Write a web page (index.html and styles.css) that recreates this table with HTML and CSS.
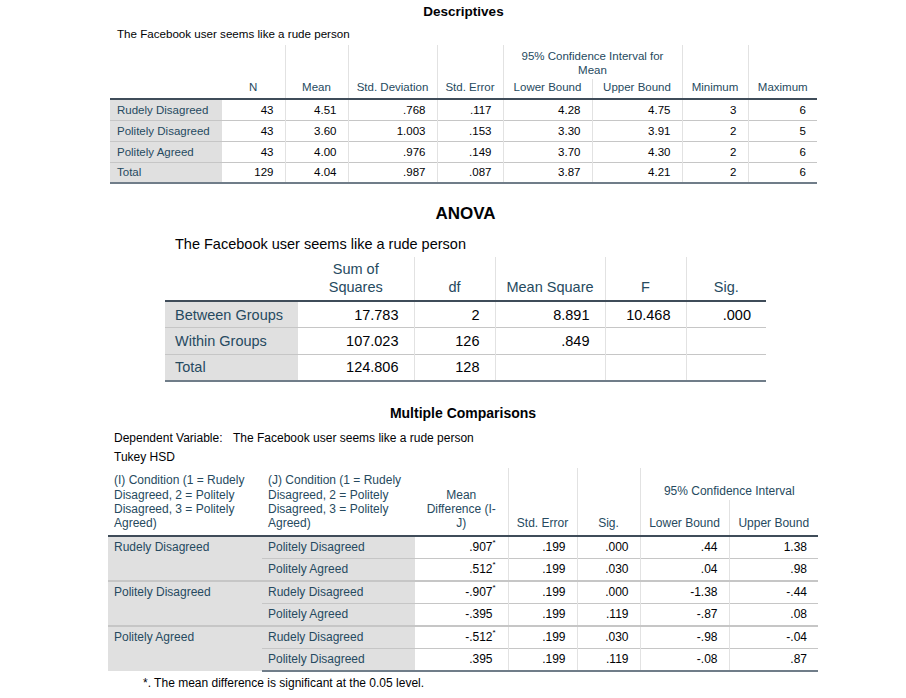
FILE: index.html
```html
<!DOCTYPE html>
<html>
<head>
<meta charset="utf-8">
<link rel="stylesheet" href="styles.css">
</head>
<body>
<section class="block desc">
  <div class="title">Descriptives</div>
  <div class="caption">The Facebook user seems like a rude person</div>
  <table class="t">
    <colgroup>
      <col class="d1"><col class="d2"><col class="d3"><col class="d4"><col class="d5"><col class="d6"><col class="d7"><col class="d8"><col class="d9">
    </colgroup>
    <thead>
      <tr class="h1">
        <th rowspan="2" class="nol"></th>
        <th rowspan="2" class="nol">N</th>
        <th rowspan="2">Mean</th>
        <th rowspan="2">Std. Deviation</th>
        <th rowspan="2">Std. Error</th>
        <th colspan="2" class="span">95% Confidence Interval for<br>Mean</th>
        <th rowspan="2">Minimum</th>
        <th rowspan="2">Maximum</th>
      </tr>
      <tr class="h2">
        <th>Lower Bound</th>
        <th>Upper Bound</th>
      </tr>
    </thead>
    <tbody>
      <tr><td class="lab">Rudely Disagreed</td><td class="nol">43</td><td>4.51</td><td>.768</td><td>.117</td><td>4.28</td><td>4.75</td><td>3</td><td>6</td></tr>
      <tr><td class="lab">Politely Disagreed</td><td class="nol">43</td><td>3.60</td><td>1.003</td><td>.153</td><td>3.30</td><td>3.91</td><td>2</td><td>5</td></tr>
      <tr><td class="lab">Politely Agreed</td><td class="nol">43</td><td>4.00</td><td>.976</td><td>.149</td><td>3.70</td><td>4.30</td><td>2</td><td>6</td></tr>
      <tr><td class="lab">Total</td><td class="nol">129</td><td>4.04</td><td>.987</td><td>.087</td><td>3.87</td><td>4.21</td><td>2</td><td>6</td></tr>
    </tbody>
  </table>
</section>

<section class="block anova">
  <div class="title">ANOVA</div>
  <div class="caption">The Facebook user seems like a rude person</div>
  <table class="t">
    <colgroup>
      <col class="a1"><col class="a2"><col class="a3"><col class="a4"><col class="a5"><col class="a6">
    </colgroup>
    <thead>
      <tr class="h1">
        <th class="nol"></th>
        <th class="nol">Sum of<br>Squares</th>
        <th>df</th>
        <th>Mean Square</th>
        <th>F</th>
        <th>Sig.</th>
      </tr>
    </thead>
    <tbody>
      <tr><td class="lab">Between Groups</td><td class="nol">17.783</td><td>2</td><td>8.891</td><td>10.468</td><td>.000</td></tr>
      <tr><td class="lab">Within Groups</td><td class="nol">107.023</td><td>126</td><td>.849</td><td></td><td></td></tr>
      <tr><td class="lab">Total</td><td class="nol">124.806</td><td>128</td><td></td><td></td><td></td></tr>
    </tbody>
  </table>
</section>

<section class="block mult">
  <div class="title">Multiple Comparisons</div>
  <div class="meta first"><span class="metakey">Dependent Variable:</span>The Facebook user seems like a rude person</div>
  <div class="meta">Tukey HSD</div>
  <table class="t">
    <colgroup>
      <col class="m1"><col class="m2"><col class="m3"><col class="m4"><col class="m5"><col class="m6"><col class="m7">
    </colgroup>
    <thead>
      <tr class="h1">
        <th rowspan="2" class="nol left">(I) Condition (1 = Rudely<br>Disagreed, 2 = Politely<br>Disagreed, 3 = Politely<br>Agreed)</th>
        <th rowspan="2" class="nol left">(J) Condition (1 = Rudely<br>Disagreed, 2 = Politely<br>Disagreed, 3 = Politely<br>Agreed)</th>
        <th rowspan="2" class="nol">Mean<br>Difference (I-<br>J)</th>
        <th rowspan="2">Std. Error</th>
        <th rowspan="2">Sig.</th>
        <th colspan="2" class="span">95% Confidence Interval</th>
      </tr>
      <tr class="h2">
        <th>Lower Bound</th>
        <th>Upper Bound</th>
      </tr>
    </thead>
    <tbody>
      <tr class="grp"><td rowspan="2" class="lab top">Rudely Disagreed</td><td class="lab">Politely Disagreed</td><td class="nol">.907<sup>*</sup></td><td>.199</td><td>.000</td><td>.44</td><td>1.38</td></tr>
      <tr class="sub"><td class="lab">Politely Agreed</td><td class="nol">.512<sup>*</sup></td><td>.199</td><td>.030</td><td>.04</td><td>.98</td></tr>
      <tr class="grp"><td rowspan="2" class="lab top">Politely Disagreed</td><td class="lab">Rudely Disagreed</td><td class="nol">-.907<sup>*</sup></td><td>.199</td><td>.000</td><td>-1.38</td><td>-.44</td></tr>
      <tr class="sub"><td class="lab">Politely Agreed</td><td class="nol">-.395<span class="nosup"></span></td><td>.199</td><td>.119</td><td>-.87</td><td>.08</td></tr>
      <tr class="grp"><td rowspan="2" class="lab top">Politely Agreed</td><td class="lab">Rudely Disagreed</td><td class="nol">-.512<sup>*</sup></td><td>.199</td><td>.030</td><td>-.98</td><td>-.04</td></tr>
      <tr class="sub"><td class="lab">Politely Disagreed</td><td class="nol">.395<span class="nosup"></span></td><td>.199</td><td>.119</td><td>-.08</td><td>.87</td></tr>
    </tbody>
  </table>
  <div class="foot">*. The mean difference is significant at the 0.05 level.</div>
</section>
</body>
</html>
```

FILE: styles.css
```css
* { box-sizing: border-box; }
body {
  margin: 0;
  background: #ffffff;
  font-family: "Liberation Sans", Arial, sans-serif;
  color: #010205;
}
.block { display: block; }
.title {
  text-align: center;
  font-weight: bold;
  height: 24px;
  line-height: 24px;
  color: #010205;
}
.caption { color: #010205; }

table.t {
  border-collapse: collapse;
  table-layout: fixed;
}
.t th, .t td {
  padding: 0;
  white-space: nowrap;
  overflow: hidden;
}
.t th {
  font-weight: normal;
  color: #264a60;
  text-align: center;
  vertical-align: bottom;
  border-left: 1px solid #e2e2e2;
}
.t th.nol, .t td.nol, .t td.lab { border-left: none; }
.t th.left { text-align: left; }
.t thead tr:last-child th, .t tr.h1 th[rowspan], .anova .t tr.h1 th { border-bottom: 2px solid #3f4c59; }
.t td {
  text-align: right;
  vertical-align: middle;
  border-left: 1px solid #e2e2e2;
  border-top: 1px solid #c6c6c6;
  color: #010205;
}
.t tbody tr:last-child td { border-bottom: 2px solid #707d89; }
.t td.lab {
  background: #e0e0e0;
  color: #264a60;
  text-align: left;
}

/* ---------- Descriptives ---------- */
.desc { margin-left: 110px; width: 707px; }
.desc .title { font-size: 13.5px; }
.desc .caption {
  font-size: 11.6px;
  height: 21px;
  line-height: 20px;
  padding-left: 7px;
}
.desc .t { font-size: 11.5px; }
.d1 { width: 112px; } .d2 { width: 63px; } .d3 { width: 63px; }
.d4 { width: 89px; } .d5 { width: 66px; } .d6 { width: 89px; }
.d7 { width: 90px; } .d8 { width: 66px; } .d9 { width: 69px; }
.desc .t tr.h1 { height: 34px; }
.desc .t tr.h2 { height: 20px; }
.desc .t th { padding: 0 2px 4px; line-height: 14px; }
.desc .t th.span { padding-bottom: 2px; }
.desc .t tbody tr { height: 21px; }
.desc .t td { padding-right: 11px; }
.desc .t td.lab { padding-left: 7px; padding-right: 0; }

/* ---------- ANOVA ---------- */
.anova { margin-left: 165px; width: 601px; margin-top: 18px; }
.anova .title { font-size: 17px; }
.anova .caption {
  font-size: 14.5px;
  line-height: 20px;
  padding: 8px 0 3px 10px;
}
.anova .t { font-size: 14.5px; }
.a1 { width: 133px; } .a2 { width: 116px; } .a3 { width: 81px; }
.a4 { width: 110px; } .a5 { width: 81px; } .a6 { width: 80px; }
.anova .t tr.h1 { height: 44px; }
.anova .t th { line-height: 18px; padding: 0 2px 4px; }
.anova .t tbody tr { height: 26.5px; }
.anova .t td { padding-right: 15px; }
.anova .t td.lab { padding-left: 10px; padding-right: 0; }

/* ---------- Multiple Comparisons ---------- */
.mult { margin-left: 108px; width: 710px; margin-top: 19px; }
.mult .title { font-size: 14px; }
.meta {
  font-size: 12px;
  line-height: 18px;
  padding-left: 6px;
  color: #010205;
}
.meta.first { padding-top: 4px; margin-bottom: 1px; }
.meta + .meta { margin-bottom: 2px; }
.metakey { display: inline-block; width: 119px; }
.mult .t { font-size: 12px; }
.m1 { width: 154px; } .m2 { width: 153px; } .m3 { width: 93px; }
.m4 { width: 69px; } .m5 { width: 63px; } .m6 { width: 89px; } .m7 { width: 89px; }
.mult .t tr.h1 { height: 32px; }
.mult .t tr.h2 { height: 36px; }
.mult .t th { line-height: 14.3px; padding: 0 2px 4px; }
.mult .t th.left { padding-left: 6px; }
.mult .t th.span { padding-bottom: 1px; }
.mult .t tbody tr { height: 22.5px; }
.mult .t td { padding-right: 11px; }
.mult .t td.lab { padding-left: 6px; padding-right: 0; }
.mult .t td.top { vertical-align: top; padding-top: 3px; }
.mult .t tr.grp td { border-top: 2px solid #c6c6c6; }
.mult .t tbody tr.grp:first-child td { border-top: none; }
.mult .t tr.sub td { border-top: 1px solid #c6c6c6; }
sup {
  font-size: 8px;
  vertical-align: 6px;
  line-height: 0;
  display: inline-block;
  width: 4px;
  text-align: left;
}
.nosup { display: inline-block; width: 4px; }
.foot {
  font-size: 12px;
  line-height: 18px;
  margin-top: 2px;
  padding-left: 35px;
  color: #010205;
}
```
